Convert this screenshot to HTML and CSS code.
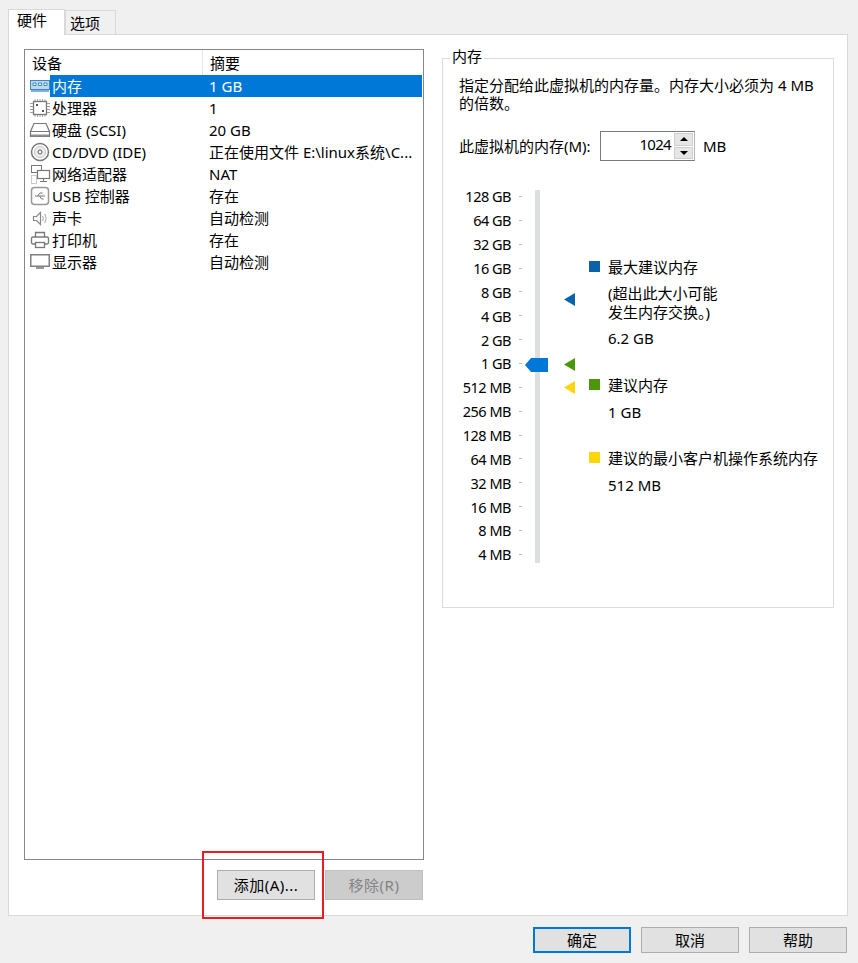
FILE: index.html
```html
<!DOCTYPE html>
<html lang="zh">
<head>
<meta charset="utf-8">
<title>虚拟机设置</title>
<link rel="stylesheet" href="styles.css">
</head>
<body>
<div class="tabs">
  <div class="tab active">硬件</div>
  <div class="tab">选项</div>
</div>
<div class="panel">
  <div class="left">
    <div class="list">
      <div class="list-head"><div class="col-a">设备</div><div class="col-b">摘要</div></div>
      <div class="row selected">
        <svg class="ico" viewBox="0 0 24 20"><rect x="1.500" y="4.500" width="19" height="9" fill="#bcd8ee" stroke="#3f86bf"/><path d="M4 7h3v2.500H4zM9.500 7h3v2.500h-3zM15 7h3v2.500h-3z" fill="#fff" stroke="#3f86bf"/><path d="M2 15h18" stroke="#7fb0d6" stroke-width="2"/></svg>
        <div class="dev">内存</div><div class="sum">1 GB</div>
      </div>
      <div class="row">
        <svg class="ico" viewBox="0 0 24 20"><rect x="4.500" y="3.500" width="13" height="13" fill="#fff" stroke="#777" stroke-width="1.300"/><path d="M6 1v2M8.500 1v2M11 1v2M13.500 1v2M16 1v2M6 17v2M8.500 17v2M11 17v2M13.500 17v2M16 17v2M1 5.500h3M1 8.500h3M1 11.500h3M1 14.500h3M18 5.500h3M18 8.500h3M18 11.500h3M18 14.500h3" stroke="#a0a0a0"/><path d="M7 6h2v2H7zM13 12h2v2h-2z" fill="#555"/></svg>
        <div class="dev">处理器</div><div class="sum">1</div>
      </div>
      <div class="row">
        <svg class="ico" viewBox="0 0 24 20"><path d="M5 3.500h12l3.500 8v5h-19v-5z" fill="#fff" stroke="#777" stroke-width="1.200"/><path d="M1.500 11.500h19" stroke="#777"/><path d="M2 15.500h18" stroke="#8c8c8c" stroke-width="2"/></svg>
        <div class="dev">硬盘 (SCSI)</div><div class="sum">20 GB</div>
      </div>
      <div class="row">
        <svg class="ico" viewBox="0 0 24 20"><circle cx="11" cy="10" r="8.500" fill="#fff" stroke="#777" stroke-width="1.500"/><circle cx="11" cy="10" r="5.500" fill="#eee" stroke="#c4c4c4"/><circle cx="11" cy="10" r="2" fill="#fff" stroke="#555"/></svg>
        <div class="dev">CD/DVD (IDE)</div><div class="sum">正在使用文件 E:\linux系统\C...</div>
      </div>
      <div class="row">
        <svg class="ico" viewBox="0 0 24 20"><rect x="2.500" y="1.500" width="10" height="7" fill="#fff" stroke="#777"/><rect x="8.500" y="6.500" width="12" height="8" fill="#fff" stroke="#777" stroke-width="1.200"/><path d="M14.500 15v2M11 17.500h7" stroke="#777" fill="none"/><path d="M2.500 11.500h5v8h-5z" stroke="#999" fill="none" stroke-dasharray="1 1"/></svg>
        <div class="dev">网络适配器</div><div class="sum">NAT</div>
      </div>
      <div class="row">
        <svg class="ico" viewBox="0 0 24 20"><rect x="2.500" y="1.500" width="17" height="17" rx="3" fill="#fff" stroke="#999" stroke-width="1.500"/><path d="M6 10h10M8.500 10l2.500-3h2.500M10.500 10l2 3h2" fill="none" stroke="#777"/></svg>
        <div class="dev">USB 控制器</div><div class="sum">存在</div>
      </div>
      <div class="row">
        <svg class="ico" viewBox="0 0 24 20"><path d="M4.500 8.500h3l4-4v12l-4-4h-3z" fill="#fff" stroke="#888" stroke-width="1.200"/><path d="M13.500 8c1 1.500 1 3.500 0 5M15.500 6c2 2.500 2 6.500 0 9" fill="none" stroke="#a0a0a0"/></svg>
        <div class="dev">声卡</div><div class="sum">自动检测</div>
      </div>
      <div class="row">
        <svg class="ico" viewBox="0 0 24 20"><path d="M6.500 7V2.500h9V7" fill="#fff" stroke="#777" stroke-width="1.300"/><rect x="2.500" y="7" width="17" height="7" rx="1.500" fill="#fff" stroke="#777" stroke-width="1.300"/><rect x="6.500" y="12.500" width="9" height="5" fill="#fff" stroke="#777" stroke-width="1.300"/></svg>
        <div class="dev">打印机</div><div class="sum">存在</div>
      </div>
      <div class="row">
        <svg class="ico" viewBox="0 0 24 20"><rect x="1.750" y="2.750" width="18.500" height="11.500" fill="#fff" stroke="#808080" stroke-width="1.500"/><path d="M7 16h8" stroke="#999" stroke-width="2"/></svg>
        <div class="dev">显示器</div><div class="sum">自动检测</div>
      </div>
    </div>
    <div class="list-actions">
      <button class="btn add">添加(A)...</button>
      <button class="btn disabled">移除(R)</button>
    </div>
  </div>
  <fieldset class="group">
    <legend>内存</legend>
    <p class="desc">指定分配给此虚拟机的内存量。内存大小必须为 4 MB<br>的倍数。</p>
    <div class="mem-row">
      <span class="mem-label">此虚拟机的内存(M):</span>
      <div class="spin">
        <div class="spin-val">1024</div>
        <div class="spin-btns">
          <div class="spin-btn"><svg width="8" height="4" viewBox="0 0 8 4"><path d="M4 0 8 4H0z" fill="#000"/></svg></div>
          <div class="spin-btn"><svg width="8" height="4" viewBox="0 0 8 4"><path d="M0 0h8L4 4z" fill="#000"/></svg></div>
        </div>
      </div>
      <span class="unit">MB</span>
    </div>
    <div class="scale-area">
      <div class="scale">
        <div class="labels">
          <div class="lab"><span>128 GB</span><i></i></div>
          <div class="lab"><span>64 GB</span><i></i></div>
          <div class="lab"><span>32 GB</span><i></i></div>
          <div class="lab"><span>16 GB</span><i></i></div>
          <div class="lab"><span>8 GB</span><i></i></div>
          <div class="lab"><span>4 GB</span><i></i></div>
          <div class="lab"><span>2 GB</span><i></i></div>
          <div class="lab"><span>1 GB</span><i></i></div>
          <div class="lab"><span>512 MB</span><i></i></div>
          <div class="lab"><span>256 MB</span><i></i></div>
          <div class="lab"><span>128 MB</span><i></i></div>
          <div class="lab"><span>64 MB</span><i></i></div>
          <div class="lab"><span>32 MB</span><i></i></div>
          <div class="lab"><span>16 MB</span><i></i></div>
          <div class="lab"><span>8 MB</span><i></i></div>
          <div class="lab"><span>4 MB</span><i></i></div>
        </div>
        <div class="track"></div>
        <svg class="thumb" width="23" height="14" viewBox="0 0 23 14"><path d="M23 0H6L0 7l6 7h17z" fill="#0078d7"/></svg>
        <svg class="mark mark-max" width="11" height="13" viewBox="0 0 11 13"><path d="M11 0v13L0 6.500z" fill="#0a63a8"/></svg>
        <svg class="mark mark-rec" width="11" height="13" viewBox="0 0 11 13"><path d="M11 0v13L0 6.500z" fill="#4c960c"/></svg>
        <svg class="mark mark-min" width="11" height="13" viewBox="0 0 11 13"><path d="M11 0v13L0 6.500z" fill="#fcd60a"/></svg>
      </div>
      <div class="key">
        <div class="key-title k1"><b class="sq blue"></b>最大建议内存</div>
        <div class="key-note">(超出此大小可能<br>发生内存交换。)</div>
        <div class="key-val v1">6.2 GB</div>
        <div class="key-title k2"><b class="sq green"></b>建议内存</div>
        <div class="key-val v2">1 GB</div>
        <div class="key-title k3"><b class="sq yellow"></b>建议的最小客户机操作系统内存</div>
        <div class="key-val v2">512 MB</div>
      </div>
    </div>
  </fieldset>
  <div class="redbox"></div>
</div>
<div class="footer">
  <button class="btn primary">确定</button>
  <button class="btn">取消</button>
  <button class="btn">帮助</button>
</div>
</body>
</html>
```
FILE: styles.css
```css
* { box-sizing: border-box; }
html, body { margin: 0; height: 100%; }
body {
  width: 858px;
  height: 963px;
  overflow: hidden;
  padding: 9px 10px 0 8px;
  background: #f0f0f0;
  color: #000;
  font: 15px/22px "Noto Sans", "Noto Sans CJK SC", sans-serif;
}
.tabs { display: flex; height: 26px; align-items: flex-end; position: relative; z-index: 1; }
.tab {
  width: 51px;
  height: 24px;
  margin-bottom: 1px;
  padding-left: 4px;
  background: #f0f0f0;
  border: 1px solid #d9d9d9;
  border-bottom: 0;
  line-height: 24px;
}
.tab.active {
  width: 57px;
  height: 26px;
  margin-bottom: 0;
  padding-left: 8px;
  background: #fff;
  line-height: 20px;
}
.panel {
  position: relative;
  display: flex;
  height: 882px;
  margin-top: -1px;
  padding: 14px 13px 0 15px;
  gap: 18px;
  background: #fff;
  border: 1px solid #d9d9d9;
}
.left { width: 400px; flex: none; }
.list { height: 811px; border: 1px solid #828790; padding: 0 1px; }
.list-head { display: flex; height: 25px; line-height: 26px; }
.col-a { width: 177px; padding-left: 6px; border-right: 1px solid #e5e5e5; }
.col-b { padding-left: 7px; }
.row { display: flex; height: 22px; align-items: center; }
.ico { width: 24px; height: 20px; flex: none; margin-left: 3px; }
.dev { width: 150px; margin-left: -1px; flex: none; white-space: nowrap; }
.sum { padding-left: 7px; white-space: nowrap; }
.row.selected { background: linear-gradient(90deg, #fff 24px, #0078d7 24px); color: #fff; }
.list-actions { display: flex; justify-content: flex-end; gap: 10px; margin-top: 10px; padding-right: 1px; }
.list-actions .btn { letter-spacing: 0.5px; }
.btn {
  width: 98px;
  height: 30px;
  padding: 0;
  background: #e1e1e1;
  border: 1px solid #adadad;
  font: inherit;
  color: #000;
}
.btn.disabled { background: #cccccc; border-color: #bfbfbf; color: #838383; }
.btn.primary { border: 2px solid #0078d7; }
.group {
  width: 392px;
  height: 560px;
  flex: none;
  margin: -1px 0 0;
  padding: 0 0 0 16px;
  min-width: 0;
  border: 1px solid #dcdcdc;
}
.group legend { margin-left: -9px; padding: 0 2px 4px; line-height: 16px; }
.desc { margin: 8px 0 0; line-height: 18px; }
.mem-row { display: flex; align-items: center; height: 30px; margin-top: 19px; }
.mem-label { width: 141px; flex: none; white-space: nowrap; }
.spin {
  display: flex;
  width: 95px;
  height: 30px;
  background: #fff;
  border: 1px solid #7a7a7a;
  border-right-color: #b4b4b4;
}
.spin-val { flex: 1; text-align: right; line-height: 24px; padding-right: 3px; letter-spacing: -0.7px; }
.spin-btns { width: 20px; display: flex; flex-direction: column; gap: 1px; padding: 1px 1px 1px 0; }
.spin-btn { flex: 1; display: flex; align-items: center; justify-content: center; background: #e6e6e6; border: 1px solid #cfcfcf; }
.unit { margin-left: 8px; }
.scale-area { display: flex; margin-top: 29px; }
.scale { position: relative; width: 130px; height: 373px; flex: none; }
.labels { position: absolute; inset: -5.500px auto auto 0; width: 63px; }
.lab { display: flex; align-items: center; justify-content: flex-end; height: 23.87px; font-size: 14.5px; letter-spacing: -0.5px; }
.lab i { width: 3px; height: 1px; margin-left: 8px; background: #bbb; }
.track { position: absolute; left: 76px; top: 0; width: 5px; height: 373px; background: #dcdedf; }
.thumb { position: absolute; left: 66px; top: 168px; }
.mark { position: absolute; left: 105px; }
.mark-max { top: 103px; }
.mark-rec { top: 168px; }
.mark-min { top: 191px; }
.key { flex: 1; padding-top: 66px; }
.key-title { position: relative; padding-left: 19px; white-space: nowrap; }
.sq { position: absolute; left: 0; top: 5px; width: 11px; height: 11px; }
.blue { background: #0a63a8; }
.green { background: #4c960c; }
.yellow { background: #fcd60a; }
.key-note { padding-left: 19px; margin-top: 6px; line-height: 19px; }
.key-val { padding-left: 19px; }
.v1 { margin-top: 5px; }
.v2 { margin-top: 5px; }
.k2 { margin-top: 25px; }
.k3 { margin-top: 24px; }
.footer { display: flex; justify-content: flex-end; gap: 10px; margin-top: 11px; padding-right: 1px; }
.footer .btn { height: 26px; }
.redbox {
  position: absolute;
  left: 193px;
  top: 816px;
  width: 122px;
  height: 68px;
  border: 2px solid #ed1c24;
}
```
